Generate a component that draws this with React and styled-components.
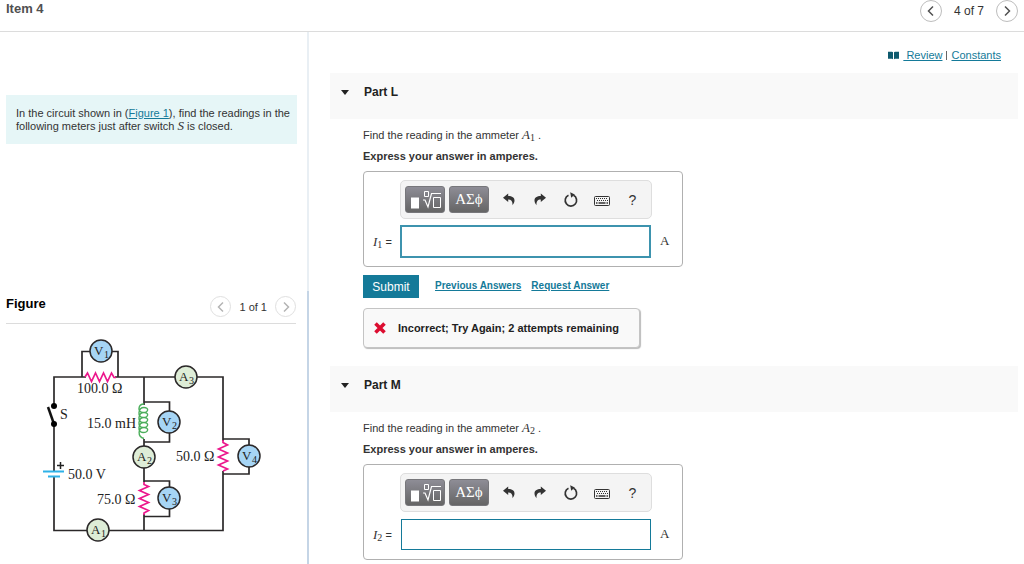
import React from 'react';
import styled, { createGlobalStyle, ThemeProvider } from 'styled-components';

const theme = {
  colors: {
    teal: '#147a99',
    text: '#333333',
    dark: '#222222',
    line: '#dcdcdc',
    panel: '#f9f9f9',
    info: '#e6f6f7',
  },
  fonts: {
    body: '"Liberation Sans", Arial, sans-serif',
    math: '"Liberation Serif", "Times New Roman", serif',
  },
};

const GlobalStyle = createGlobalStyle`
  * {
    box-sizing: border-box;
  }

  body {
    margin: 0;
    background: #ffffff;
    color: ${theme.colors.text};
    font-family: ${theme.fonts.body};
    font-size: 11px;
    line-height: 13px;
  }

  a {
    color: ${theme.colors.teal};
  }

  button, input {
    font-family: inherit;
  }

  svg {
    flex-shrink: 0;
  }
`;

const Root = styled.div`
  display: flex;
  flex-direction: column;
  min-height: 100vh;
`;

const Header = styled.header`
  display: flex;
  justify-content: space-between;
  height: 32px;
  padding: 0 6px;
  border-bottom: 1px solid ${props => props.theme.colors.line};
`;

const ItemTitle = styled.h1`
  margin: 0;
  color: #505050;
  font-size: 13px;
  line-height: 17px;
`;

const Pager = styled.nav`
  display: flex;
  align-items: center;
  gap: ${props => (props.$small ? '8px' : '12px')};
  height: 21px;
  color: ${props => props.theme.colors.text};
  font-size: ${props => (props.$small ? '11px' : '12px')};
`;

const PagerLabel = styled.span`
  padding-top: 2px;
`;

const RoundButton = styled.button`
  display: flex;
  align-items: center;
  justify-content: center;
  width: ${props => (props.$small ? '21px' : '22px')};
  height: ${props => (props.$small ? '21px' : '22px')};
  padding: 0;
  border: 1px solid ${props => (props.$small ? '#e0e0e0' : '#bdbdbd')};
  border-radius: 50%;
  background: #ffffff;
  color: ${props => (props.$small ? '#b4b4b4' : '#505050')};
`;

const Columns = styled.div`
  display: flex;
  flex: 1;
`;

const Sidebar = styled.aside`
  display: flex;
  flex-direction: column;
  flex: 0 0 309px;
`;

const Prompt = styled.section`
  height: 259px;
  padding: 63px 10px 0 6px;
  border-right: 2px solid #e9eff4;
`;

const PromptBox = styled.p`
  margin: 0;
  padding: 12px 4px 11px 10px;
  background: ${props => props.theme.colors.info};
`;

const FigurePane = styled.section`
  flex: 1;
  padding: 5px 11px 0 6px;
  border-right: 2px solid #c5d5e6;
`;

const FigureHeader = styled.div`
  display: flex;
  justify-content: space-between;
  height: 28px;
  border-bottom: 1px solid ${props => props.theme.colors.line};
`;

const FigureTitle = styled.h2`
  margin: 0;
  color: #000000;
  font-size: 13px;
  line-height: 15px;
`;

const Circuit = styled.svg`
  display: block;
  margin: 11px 0 0 34px;
  font-family: ${props => props.theme.fonts.math};
`;

const Main = styled.main`
  flex: 1;
  min-width: 0;
  padding: 16px 6px 0 21px;
`;

const Resources = styled.div`
  display: flex;
  align-items: center;
  justify-content: flex-end;
  gap: 4px;
  height: 14px;
  margin-bottom: 11px;
  padding-right: 17px;
`;

const ReviewLink = styled.a`
  white-space: pre;
`;

const Divider = styled.span`
  width: 1px;
  height: 9px;
  background: #666666;
`;

const Part = styled.section`
  margin-bottom: 18px;
`;

const PartHeader = styled.div`
  display: flex;
  gap: 15px;
  height: 46px;
  padding: 12px 11px;
  background: ${props => props.theme.colors.panel};
`;

const PartTitle = styled.h2`
  margin: 0;
  color: ${props => props.theme.colors.dark};
  font-size: 12px;
  line-height: 14px;
`;

const Disclosure = styled.button`
  display: flex;
  height: 14px;
  padding: 5px 0 0;
  border: 0;
  background: none;
`;

const PartBody = styled.div`
  padding: 9px 33px 0;
`;

const Question = styled.p`
  margin: 0 0 8px;
  line-height: 14px;
`;

const Instruction = styled.p`
  margin: 0 0 8px;
  font-weight: bold;
  line-height: 13px;
`;

const Variable = styled.i`
  font-family: ${props => props.theme.fonts.math};
  font-size: 13px;
  line-height: 0;
`;

const Sub = styled.span`
  font-family: ${props => props.theme.fonts.math};
  font-size: 10px;
  line-height: 0;
  vertical-align: -2px;
`;

const AnswerBox = styled.div`
  display: grid;
  grid-template-columns: 36px 252px auto;
  align-content: start;
  row-gap: 6px;
  width: 320px;
  max-width: 100%;
  height: 96px;
  padding: 8px 0 0;
  border: 1px solid #b0b0b0;
  border-radius: 4px;
`;

const Toolbar = styled.div`
  display: flex;
  grid-row: 1;
  grid-column: 2;
  align-items: center;
  height: 39px;
  padding-left: 4px;
  border: 1px solid #dedede;
  border-radius: 5px;
  background: #f4f4f4;
`;

const PaletteButton = styled.button`
  display: flex;
  flex-shrink: 0;
  align-items: center;
  justify-content: center;
  width: 40px;
  height: 27px;
  margin-right: 4px;
  padding: 0;
  border: 1px solid #77777b;
  border-radius: 3px;
  background: linear-gradient(#8e8d96, #656565);
  color: #ffffff;
  font-family: ${props => props.theme.fonts.math};
  font-size: 15px;
`;

const ToolButton = styled.button`
  display: flex;
  flex-shrink: 0;
  align-items: center;
  justify-content: center;
  width: 31px;
  height: 27px;
  padding: 0;
  border: 0;
  background: none;
  color: #333333;
  font-size: 14px;
`;

const AnswerLabel = styled.label`
  grid-row: 2;
  grid-column: 1;
  padding: 10px 0 0 9px;
  line-height: 14px;
  white-space: nowrap;
`;

const AnswerInput = styled.input`
  grid-row: 2;
  grid-column: 2;
  width: ${props => (props.$active ? '251px' : '250px')};
  height: ${props => (props.$active ? '33px' : '31px')};
  margin-top: ${props => (props.$active ? 0 : '1px')};
  margin-left: ${props => (props.$active ? 0 : '1px')};
  padding: 4px 6px;
  border: ${props => (props.$active ? '2px solid #3d93ae' : '1px solid #147a99')};
  outline: none;
  background: #ffffff;
  font-size: 14px;
`;

const Unit = styled.span`
  grid-row: 2;
  grid-column: 3;
  padding: 9px 0 0 8px;
  font-family: ${props => props.theme.fonts.math};
  font-size: 13px;
  line-height: 14px;
`;

const Actions = styled.div`
  display: flex;
  gap: 10px;
  margin-top: 8px;
  font-size: 10px;
  font-weight: bold;
  line-height: 21px;
`;

const SubmitButton = styled.button`
  width: 56px;
  height: 23px;
  margin-right: 6px;
  padding: 0;
  border: 0;
  background: ${props => props.theme.colors.teal};
  color: #ffffff;
  font-size: 12px;
`;

const Feedback = styled.div`
  display: flex;
  align-items: center;
  gap: 12px;
  width: 277px;
  height: 40px;
  margin-top: 10px;
  padding: 0 10px;
  border: 1px solid #c4c4c4;
  border-radius: 4px;
  background: ${props => props.theme.colors.panel};
  box-shadow: 1px 1px 1px #bbbbbb;
  color: ${props => props.theme.colors.dark};
  font-size: 11px;
  font-weight: bold;
  white-space: nowrap;
`;

const Chevron = ({ right }) => (
  <svg width="8" height="12" viewBox="0 0 8 12" fill="none" stroke="currentColor" strokeWidth="1.500">
    <path d={right ? 'M2 1.500L6.500 6 2 10.500' : 'M6 1.500L1.500 6 6 10.500'} />
  </svg>
);

const BookIcon = () => (
  <svg width="11" height="9" viewBox="0 0 11 9" fill="#0e5a6e">
    <path d="M0 .800h4l1 .400V8.200l-1-.400H0zM11 .800H7l-1 .400V8.200l1-.400h4z" />
  </svg>
);

const TemplateIcon = () => (
  <svg width="32" height="21" viewBox="0 0 32 21" fill="none" stroke="#ffffff">
    <path d="M2 8.500h8v11H2z" fill="#ffffff" stroke="none" />
    <path d="M15.500 2.500h4v5h-4z" />
    <path d="M14 11h2l3 7 3.500-13.500H32" strokeWidth="1.200" />
    <path d="M24.500 8.500h7v10h-7z" />
  </svg>
);

const UndoIcon = ({ flip }) => (
  <svg width="12" height="13" viewBox="0 0 12 13" fill="#333333">
    <path
      d="M5.200.500L0 4.800l5.200 4.300V6.500c3.300 0 4.500 1.900 4.300 5.800 1.200-1.400 2-3 2-4.700 0-3-2.300-4.600-6.300-4.600z"
      transform={flip ? 'translate(12 0) scale(-1 1)' : undefined}
    />
  </svg>
);

const ResetIcon = () => (
  <svg width="16" height="16" viewBox="0 0 16 16">
    <path d="M10.500 3.300A5.700 5.700 0 1 1 5.500 3.200" fill="none" stroke="#333333" strokeWidth="1.700" />
    <path d="M7.200.200l4.600 2.200-3.600 3.400z" fill="#333333" />
  </svg>
);

const KeyboardIcon = () => (
  <svg width="16" height="12" viewBox="0 -2 16 12" fill="none" stroke="#333333">
    <rect x=".5" y=".5" width="15" height="9" rx="1" />
    <path d="M2 2.500h12M3 4.500h11" strokeDasharray="1 1" />
    <path d="M2 7h1.500M4.500 7h7M12.500 7H14" strokeWidth="1.300" />
  </svg>
);

const WrongIcon = () => (
  <svg width="12" height="12" viewBox="0 0 12 12" stroke="#dc0d30" strokeWidth="3.600">
    <path d="M1.500 1.500l9 9M10.500 1.500l-9 9" />
  </svg>
);

const meters = [
  { kind: 'V', sub: 1, x: 101, y: 351 },
  { kind: 'V', sub: 2, x: 169, y: 422 },
  { kind: 'V', sub: 3, x: 169, y: 498 },
  { kind: 'V', sub: 4, x: 249, y: 456 },
  { kind: 'A', sub: 1, x: 98, y: 530 },
  { kind: 'A', sub: 2, x: 144, y: 457 },
  { kind: 'A', sub: 3, x: 186, y: 377 },
];

function CircuitFigure() {
  return (
    <Circuit width="225" height="215" viewBox="40 335 225 215" role="img" aria-label="Circuit diagram">
      <g fill="none" stroke="#2b2829" strokeWidth="1.700">
        <path d="M54 406v-29h32M115 377h108v64M223 471v59.500H54V477M54 471V424" />
        <path d="M82 377v-25.500h36V377M144 377v28M144 439v43M144 514v16" />
        <path d="M144 402h25.500v40H144M144 481h25.500v35.500H144M223 439h26v35h-26" />
      </g>
      <g fill="none" stroke="#ec178c" strokeWidth="1.700">
        <path d="M85 377l2.500-4 4 8.500 4-8.500 4 8.500 4-8.500 4 8.500 4-8.500 2.500 4.500h2" />
        <path d="M144 482v2.500l4.500 2-9 4 9 4-9 4 9 4-9 4 9 4-4.500 2.500v2" />
        <path d="M223 440v2.500l4.500 2.500-9 4 9 4-9 4 9 4-9 4 9 4-4.500 2" />
      </g>
      <path
        d="M144 404c-6 0-7 8.500-1 8.500 6 0 6-5 1-5-6 0-7 10-1 10 6 0 6-5 1-5-6 0-7 10-1 10 6 0 6-5 1-5-6 0-7 10-1 10 6 0 6-5 1-5-6 0-7 10-1 10 6 0 6-5 1-5-6 0-7 9 0 11"
        fill="none"
        stroke="#4bae5b"
        strokeWidth="1.400"
      />
      <path d="M54 424l-6-17" stroke="#111111" strokeWidth="2.500" />
      <circle cx="54" cy="406" r="3" />
      <circle cx="54" cy="424" r="3" />
      <path d="M43 471.500h21M48 476.500h12" stroke="#2eb2e8" strokeWidth="2" />
      <path d="M57 465.500h7M60.500 462v7" stroke="#222222" strokeWidth="1.500" />
      {meters.map(({ kind, sub, x, y }) => (
        <g key={kind + sub}>
          <circle cx={x} cy={y} r="11" fill={kind === 'V' ? '#a6d5f5' : '#deedd7'} stroke="#2b2829" strokeWidth="1.500" />
          <text x={x - 7} y={y + 4} fontSize="13" fill="#222222">{kind}</text>
          <text x={x + 3} y={y + 7} fontSize="10" fill="#222222">{sub}</text>
        </g>
      ))}
      <g fontSize="14" fill="#222222">
        <text x="77" y="393">100.0 Ω</text>
        <text x="60" y="419">S</text>
        <text x="87" y="428">15.0 mH</text>
        <text x="176" y="461">50.0 Ω</text>
        <text x="68" y="479">50.0 V</text>
        <text x="97" y="504">75.0 Ω</text>
      </g>
    </Circuit>
  );
}

function ProblemPart({ letter, index, active, children }) {
  const inputId = `answer-${letter}`;
  return (
    <Part>
      <PartHeader>
        <Disclosure aria-label={`Toggle part ${letter}`}>
          <svg width="8" height="5" viewBox="0 0 8 5" fill="#222222">
            <path d="M0 0h8L4 5z" />
          </svg>
        </Disclosure>
        <PartTitle>Part {letter}</PartTitle>
      </PartHeader>
      <PartBody>
        <Question>
          Find the reading in the ammeter <Variable>A</Variable>
          <Sub>{index}</Sub> .
        </Question>
        <Instruction>Express your answer in amperes.</Instruction>
        <AnswerBox>
          <Toolbar>
            <PaletteButton aria-label="Templates"><TemplateIcon /></PaletteButton>
            <PaletteButton>ΑΣϕ</PaletteButton>
            <ToolButton aria-label="Undo"><UndoIcon /></ToolButton>
            <ToolButton aria-label="Redo"><UndoIcon flip /></ToolButton>
            <ToolButton aria-label="Reset"><ResetIcon /></ToolButton>
            <ToolButton aria-label="Keyboard"><KeyboardIcon /></ToolButton>
            <ToolButton>?</ToolButton>
          </Toolbar>
          <AnswerLabel htmlFor={inputId}>
            <Variable>I</Variable>
            <Sub>{index}</Sub> =
          </AnswerLabel>
          <AnswerInput id={inputId} type="text" $active={active} />
          <Unit>A</Unit>
        </AnswerBox>
        {children}
      </PartBody>
    </Part>
  );
}

function App() {
  return (
    <ThemeProvider theme={theme}>
      <GlobalStyle />
      <Root>
        <Header>
          <ItemTitle>Item 4</ItemTitle>
          <Pager>
            <RoundButton aria-label="Previous item"><Chevron /></RoundButton>
            <PagerLabel>4 of 7</PagerLabel>
            <RoundButton aria-label="Next item"><Chevron right /></RoundButton>
          </Pager>
        </Header>
        <Columns>
          <Sidebar>
            <Prompt>
              <PromptBox>
                In the circuit shown in (<a href="#figure">Figure 1</a>), find the readings in the
                following meters just after switch <Variable>S</Variable> is closed.
              </PromptBox>
            </Prompt>
            <FigurePane id="figure">
              <FigureHeader>
                <FigureTitle>Figure</FigureTitle>
                <Pager $small>
                  <RoundButton $small aria-label="Previous figure"><Chevron /></RoundButton>
                  <PagerLabel>1 of 1</PagerLabel>
                  <RoundButton $small aria-label="Next figure"><Chevron right /></RoundButton>
                </Pager>
              </FigureHeader>
              <CircuitFigure />
            </FigurePane>
          </Sidebar>
          <Main>
            <Resources>
              <BookIcon />
              <ReviewLink href="#review"> Review</ReviewLink>
              <Divider />
              <a href="#constants">Constants</a>
            </Resources>
            <ProblemPart letter="L" index={1} active>
              <Actions>
                <SubmitButton>Submit</SubmitButton>
                <a href="#previous">Previous Answers</a>
                <a href="#request">Request Answer</a>
              </Actions>
              <Feedback>
                <WrongIcon />
                Incorrect; Try Again; 2 attempts remaining
              </Feedback>
            </ProblemPart>
            <ProblemPart letter="M" index={2} />
          </Main>
        </Columns>
      </Root>
    </ThemeProvider>
  );
}

export default App;
